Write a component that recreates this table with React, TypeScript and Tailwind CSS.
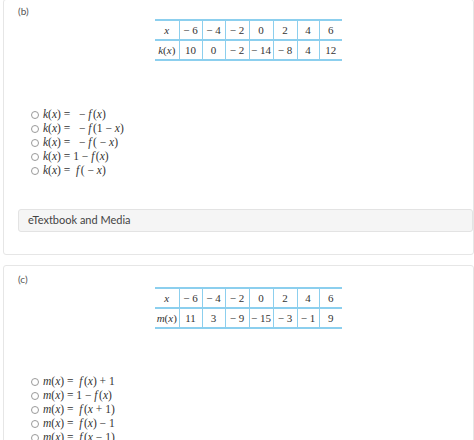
import React from "react";

const colW = [24, 23, 23, 24, 24, 24, 22, 23];

const tables = {
  b: {
    fn: "k",
    xs: ["− 6", "− 4", "− 2", "0", "2", "4", "6"],
    ys: ["10", "0", "− 2", "− 14", "− 8", "4", "12"],
  },
  c: {
    fn: "m",
    xs: ["− 6", "− 4", "− 2", "0", "2", "4", "6"],
    ys: ["11", "3", "− 9", "− 15", "− 3", "− 1", "9"],
  },
};

const serif = { fontFamily: '"Liberation Serif", "Times New Roman", serif' };

function ValueTable({ fn, xs, ys }: { fn: string; xs: string[]; ys: string[] }) {
  const rows = [
    [<i key="x">x</i>, ...xs],
    [
      <span key="f">
        <i>{fn}</i>(<i>x</i>)
      </span>,
      ...ys,
    ],
  ];
  return (
    <table
      className="border-collapse text-[11px] text-[#333] ml-[151px]"
      style={serif}
    >
      <tbody>
        {rows.map((row, r) => (
          <tr
            key={r}
            className={
              r === 0
                ? "border-t-2 border-b-2 border-[#8ccfee]"
                : "border-b-2 border-[#8ccfee]"
            }
          >
            {row.map((cell, i) => (
              <td
                key={i}
                style={{ width: colW[i] }}
                className={`h-[20px] p-0 text-center ${
                  i > 0 ? "border-l border-[#8ccfee]" : ""
                }`}
              >
                {cell}
              </td>
            ))}
          </tr>
        ))}
      </tbody>
    </table>
  );
}

function Options({ items }: { items: React.ReactNode[] }) {
  return (
    <div className="flex flex-col ml-[27px]" style={serif}>
      {items.map((it, i) => (
        <label key={i} className="flex items-center h-[14px] text-[11.5px] text-[#333] whitespace-pre">
          <span className="w-[8px] h-[8px] rounded-full border border-[#9a9a9a] bg-white mr-[4px]" />
          <span>{it}</span>
        </label>
      ))}
    </div>
  );
}

const K = () => (
  <>
    <i>k</i>(<i>x</i>)
  </>
);
const M = () => (
  <>
    <i>m</i>(<i>x</i>)
  </>
);
const F = ({ a }: { a: React.ReactNode }) => (
  <>
    <i className="pr-[1.5px]">f</i>({a})
  </>
);
const X = () => <i>x</i>;

const kOptions = [
  <><K />{" =   − "}<F a={<X />} /></>,
  <><K />{" =   − "}<F a={<>1 − <X /></>} /></>,
  <><K />{" =   − "}<F a={<>{" − "}<X /></>} /></>,
  <><K />{" = 1 − "}<F a={<X />} /></>,
  <><K />{" =  "}<F a={<>{" − "}<X /></>} /></>,
];

const mOptions = [
  <><M />{" =  "}<F a={<X />} />{" + 1"}</>,
  <><M />{" = 1 − "}<F a={<X />} /></>,
  <><M />{" =  "}<F a={<><X />{" + 1"}</>} /></>,
  <><M />{" =  "}<F a={<X />} />{" − 1"}</>,
  <><M />{" =  "}<F a={<><X />{" − 1"}</>} /></>,
];

export default function App() {
  const sans = { fontFamily: 'Lato, "Open Sans", sans-serif' };
  return (
    <div className="w-[474px] h-[440px] bg-white overflow-hidden">
      {/* part (b) card */}
      <div className="ml-[3px] -mt-px h-[256px] border border-[#e6e6e6] rounded-[3px] bg-white">
        <div className="pl-[14px] pt-[4px] text-[10px] text-[#555]" style={sans}>
          (b)
        </div>
        <div>
          <ValueTable {...tables.b} />
        </div>
        <div className="mt-[47px]">
          <Options items={kOptions} />
        </div>
        <div
          className="mt-[31px] ml-[14px] h-[23px] border border-[#e3e3e3] rounded-[3px] bg-[#f5f5f5] flex items-center pl-[9px] text-[11px] text-[#444]"
          style={sans}
        >
          eTextbook and Media
        </div>
      </div>

      {/* part (c) card */}
      <div className="ml-[3px] mt-[10px] h-[200px] border border-[#e6e6e6] rounded-[3px] bg-white">
        <div className="pl-[14px] pt-[6px] text-[10px] text-[#555]" style={sans}>
          (c)
        </div>
        <div>
          <ValueTable {...tables.c} />
        </div>
        <div className="mt-[46px]">
          <Options items={mOptions} />
        </div>
      </div>
    </div>
  );
}
